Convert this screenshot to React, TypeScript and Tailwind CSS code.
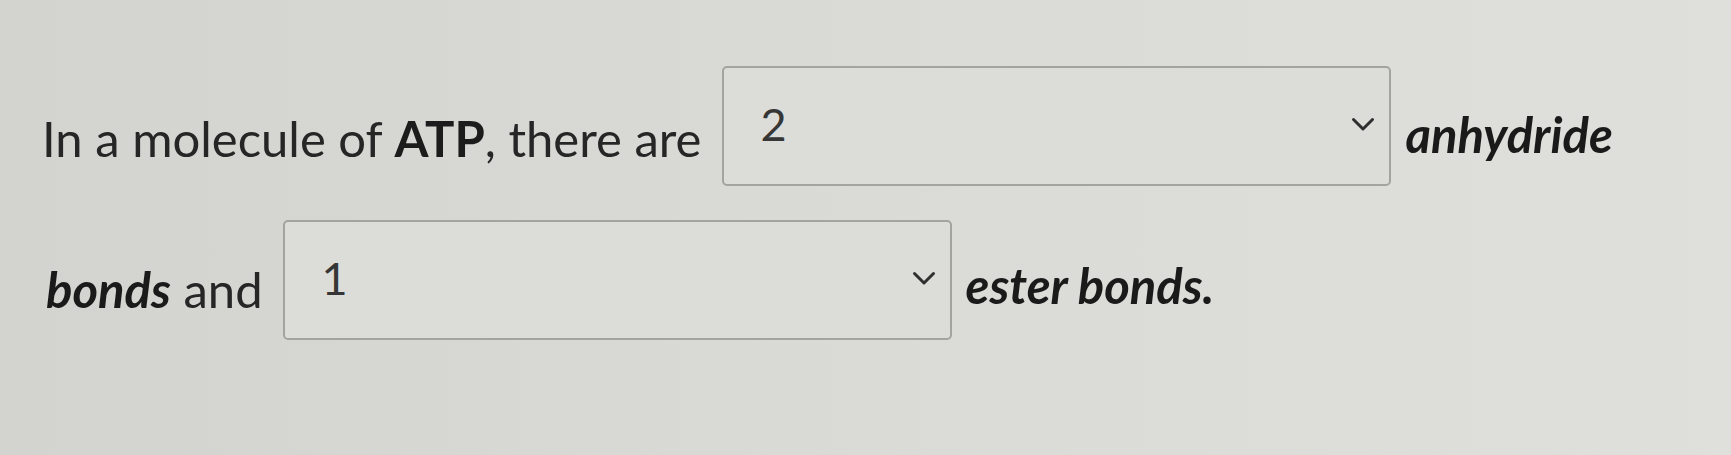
// Small caret drawn for the select boxes
function Caret() {
  return (
    <svg width="24" height="15" viewBox="0 0 24 15" fill="none" className="mb-[4px] shrink-0">
      <path d="M2.5 2.5 L12 12 L21.5 2.5" stroke="#2f2f2f" strokeWidth="3" strokeLinecap="round" strokeLinejoin="round" />
    </svg>
  );
}

// Dropdown blank used inside the sentence
function Choice({ value }: { value: string }) {
  return (
    <div className="flex h-[120px] w-[669px] shrink-0 items-center justify-between rounded-[5px] border-2 border-[#a3a3a0] bg-[#dcdcd9] pl-[37px] pr-[14px]">
      <span className="mb-[4px] font-['Lato',sans-serif] text-[45px] font-normal leading-none text-[#363636]">{value}</span>
      <Caret />
    </div>
  );
}

export default function App() {
  return (
    <div className="h-[455px] w-full overflow-hidden bg-linear-to-r from-[#d3d3d0] via-[#dadad7] to-[#dfe0dc] pl-[42px] pt-[66px] font-['Lato',sans-serif] text-[49px] leading-none text-[#262626]">
      <div className="flex items-start">
        <span className="mt-[48px] whitespace-nowrap">
          In a molecule of <b className="font-bold text-[#1c1c1c]">ATP</b>, there are
        </span>
        <div className="ml-[20px]">
          <Choice value="2" />
        </div>
        <span className="ml-[15px] mt-[44px] whitespace-nowrap font-bold italic text-[#1a1a1a]">anhydride</span>
      </div>
      <div className="ml-[4px] mt-[34px] flex items-start">
        <span className="mt-[45px] whitespace-nowrap">
          <i className="font-bold text-[#1a1a1a]">bonds</i> and
        </span>
        <div className="ml-[20px]">
          <Choice value="1" />
        </div>
        <span className="ml-[14px] mt-[41px] whitespace-nowrap font-bold italic text-[#1a1a1a]">ester bonds.</span>
      </div>
    </div>
  );
}
